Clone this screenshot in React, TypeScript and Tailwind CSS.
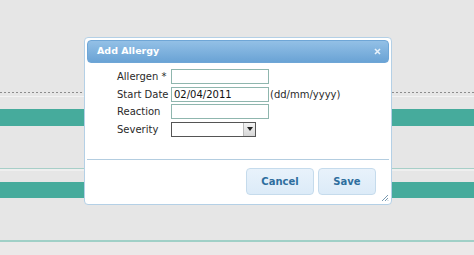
import React from "react";

const font = "font-['DejaVu_Sans',Verdana,sans-serif]";

function Field({ w = "w-[98px]", value = "" }: { w?: string; value?: string }) {
  return (
    <div
      className={`${w} h-[15px] border border-[#8fb6ae] bg-white px-[2px] text-[10px] leading-[13px] text-[#111]`}
    >
      {value}
    </div>
  );
}

function Background() {
  return (
    <div className="flex h-[255px] w-[474px] flex-col bg-[#e6e6e6]">
      <div className="h-[92px]" />
      <div className="h-px bg-[repeating-linear-gradient(90deg,#8c8c8c_0_2px,transparent_2px_4px)]" />
      <div className="h-[3px]" />
      <div className="h-px bg-[#f3f3f3]" />
      <div className="h-[12px]" />
      <div className="h-[17px] bg-[#46ab9c]" />
      <div className="h-[42px]" />
      <div className="h-px bg-[#a7cfc8]" />
      <div className="h-[2px] bg-[#efefef]" />
      <div className="h-[11px]" />
      <div className="h-[16px] bg-[#46ab9c]" />
      <div className="h-[42px]" />
      <div className="h-[2px] bg-[#a0d0c7]" />
      <div className="flex-1 bg-[#ebe9e9]" />
    </div>
  );
}

function Dialog() {
  return (
    <div
      className={`absolute left-[84px] top-[37px] flex h-[168px] w-[308px] flex-col rounded-[4px] border border-[#b4d0e6] bg-white p-[2px] ${font}`}
    >
      <div className="flex h-[23px] items-center justify-between rounded-[4px] border border-[#6fa6d6] bg-[linear-gradient(#93c0e6,#6aa3d5)] pl-[9px] pr-[7px]">
        <span className="text-[9.5px] font-bold text-white">Add Allergy</span>
        <svg width="7" height="7" viewBox="0 0 7 7">
          <path d="M1 1 L6 6 M6 1 L1 6" stroke="#e8f2fb" strokeWidth="1.6" />
        </svg>
      </div>
      <div className="grid grid-cols-[54px_auto] items-center gap-y-[2.6px] pl-[30px] pt-[6px] text-[10px] text-[#2a2a2a]">
        <span className="leading-[15px]">Allergen *</span>
        <Field />
        <span className="leading-[15px]">Start Date</span>
        <div className="flex items-center gap-[1px]">
          <Field value="02/04/2011" />
          <span>(dd/mm/yyyy)</span>
        </div>
        <span className="leading-[15px]">Reaction</span>
        <Field />
        <span className="leading-[15px]">Severity</span>
        <div className="flex h-[15px] w-[85px] border border-[#555] bg-white">
          <div className="flex-1" />
          <div className="flex w-[12px] items-center justify-center border-l border-[#bbb] bg-[linear-gradient(#f4f4f4,#d6d6d6)]">
            <svg width="6" height="4" viewBox="0 0 6 4">
              <path d="M0 0 H6 L3 4 Z" fill="#222" />
            </svg>
          </div>
        </div>
      </div>
      <div className="mt-[22px] h-px bg-[#b3cde0]" />
      <div className="flex justify-end gap-[4px] pr-[13px] pt-[8px]">
        <button className="h-[27px] w-[68px] rounded-[4px] border border-[#c5dbec] bg-[linear-gradient(#e8f2fb,#dcebf8)] text-[10px] font-bold text-[#2e6e9e]">
          Cancel
        </button>
        <button className="h-[27px] w-[58px] rounded-[4px] border border-[#c5dbec] bg-[linear-gradient(#e8f2fb,#dcebf8)] text-[10px] font-bold text-[#2e6e9e]">
          Save
        </button>
      </div>
      <svg className="absolute bottom-[2px] right-[2px]" width="9" height="9" viewBox="0 0 9 9">
        <path d="M8 2 L2 8 M8 5 L5 8 M8 7.5 L7.5 8" stroke="#6b8fa8" strokeWidth="0.9" />
      </svg>
    </div>
  );
}

export default function App() {
  return (
    <div className="relative h-[255px] w-[474px] overflow-hidden">
      <Background />
      <Dialog />
    </div>
  );
}
